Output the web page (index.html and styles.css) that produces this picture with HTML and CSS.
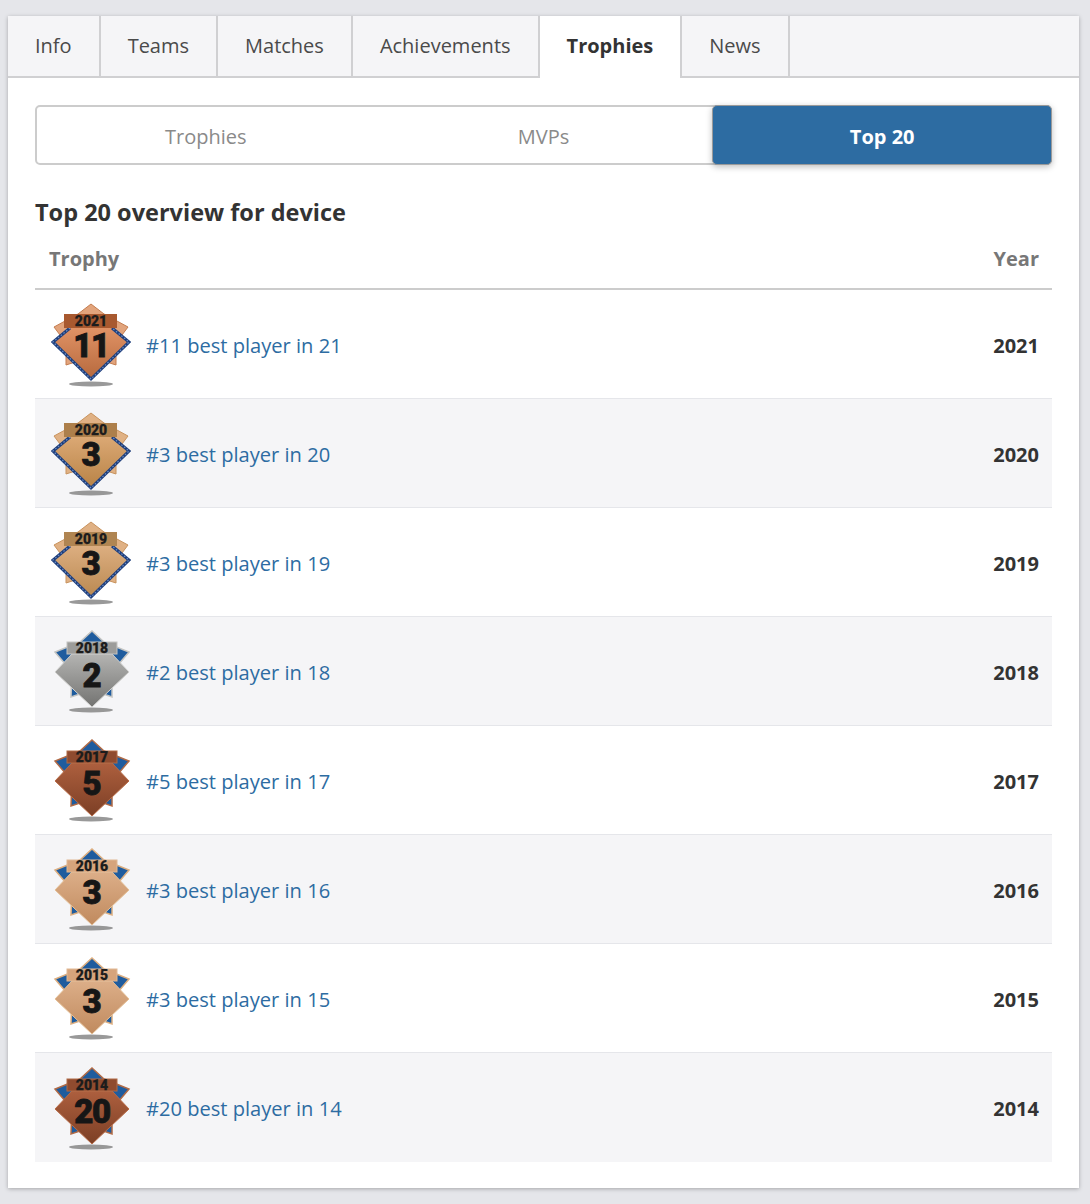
FILE: index.html
```html
<!DOCTYPE html>
<html lang="en">
<head>
<meta charset="utf-8">
<title>Trophies</title>
<link rel="stylesheet" href="styles.css">
</head>
<body>
<svg class="defs" aria-hidden="true">
  <defs>
    <linearGradient id="copper" x1="0" y1="0" x2="0" y2="1"><stop offset="0" stop-color="#e09265"/><stop offset="1" stop-color="#b5683c"/></linearGradient>
    <linearGradient id="tan" x1="0" y1="0" x2="0" y2="1"><stop offset="0" stop-color="#dba874"/><stop offset="1" stop-color="#b78245"/></linearGradient>
    <linearGradient id="tan2" x1="0" y1="0" x2="0" y2="1"><stop offset="0" stop-color="#dcae80"/><stop offset="1" stop-color="#b98850"/></linearGradient>
    <linearGradient id="silver" x1="0" y1="0" x2="0" y2="1"><stop offset="0" stop-color="#b4b4b2"/><stop offset="1" stop-color="#737371"/></linearGradient>
    <linearGradient id="brown" x1="0" y1="0" x2="0" y2="1"><stop offset="0" stop-color="#ad5f3e"/><stop offset="1" stop-color="#7c3f25"/></linearGradient>
    <linearGradient id="sand" x1="0" y1="0" x2="0" y2="1"><stop offset="0" stop-color="#dcae88"/><stop offset="1" stop-color="#c08a5e"/></linearGradient>
    <path id="star-a" d="M51 9 64 19 88 32 76 48 76 70 51 62 26 70 26 48 14 32 38 19Z"/>
    <path id="star-b" d="M52 9 64 20 89 30 72 50 72 75 52 68 31 75 32 50 15 30 40 20Z"/>
    <path id="gem-a" d="M30 33 72 33 90 47 51 85 12 47Z"/>
    <path id="gem-b" d="M32 32 72 32 89 50 52 85 15 50Z"/>
    <path id="rim" d="M30 33 13 47 51 84 89 47 72 33"/>
  </defs>
</svg>
<main class="card">
  <nav class="tabs">
    <a class="tab">Info</a>
    <a class="tab">Teams</a>
    <a class="tab">Matches</a>
    <a class="tab">Achievements</a>
    <a class="tab active">Trophies</a>
    <a class="tab">News</a>
  </nav>
  <section class="content">
    <div class="segmented">
      <a class="seg">Trophies</a>
      <a class="seg">MVPs</a>
      <a class="seg on">Top 20</a>
    </div>
    <h2 class="title">Top 20 overview for device</h2>
    <div class="thead"><span>Trophy</span><span>Year</span></div>

    <div class="row">
      <svg class="badge" viewBox="11 8 80 84">
        <ellipse class="shadow" cx="51" cy="89" rx="22" ry="2.5"/>
        <use href="#star-a" fill="#e2a47c" stroke="#c47d50"/>
        <use href="#gem-a" fill="url(#copper)"/>
        <use href="#rim" class="rim"/>
        <use href="#rim" class="dots"/>
        <rect x="24" y="19" width="53" height="14" fill="#a8592f"/>
        <text class="yr" x="51" y="31">2021</text>
        <text class="num pair" x="51" y="62">11</text>
      </svg>
      <a class="link">#11 best player in 21</a>
      <b class="year">2021</b>
    </div>

    <div class="row alt">
      <svg class="badge" viewBox="11 8 80 84">
        <ellipse class="shadow" cx="51" cy="89" rx="22" ry="2.5"/>
        <use href="#star-a" fill="#e0b184" stroke="#c8935e"/>
        <use href="#gem-a" fill="url(#tan)"/>
        <use href="#rim" class="rim"/>
        <use href="#rim" class="dots"/>
        <rect x="24" y="19" width="53" height="14" fill="#ad7f4b"/>
        <text class="yr" x="51" y="31">2020</text>
        <text class="num" x="51" y="62">3</text>
      </svg>
      <a class="link">#3 best player in 20</a>
      <b class="year">2020</b>
    </div>

    <div class="row">
      <svg class="badge" viewBox="11 8 80 84">
        <ellipse class="shadow" cx="51" cy="89" rx="22" ry="2.5"/>
        <use href="#star-a" fill="#e0b184" stroke="#c8935e"/>
        <use href="#gem-a" fill="url(#tan2)"/>
        <use href="#rim" class="rim"/>
        <use href="#rim" class="dots"/>
        <rect x="24" y="19" width="53" height="14" fill="#b08552"/>
        <text class="yr" x="51" y="31">2019</text>
        <text class="num" x="51" y="62">3</text>
      </svg>
      <a class="link">#3 best player in 19</a>
      <b class="year">2019</b>
    </div>

    <div class="row alt">
      <svg class="badge" viewBox="11 8 80 84">
        <ellipse class="shadow" cx="51" cy="88" rx="22" ry="2.5"/>
        <use href="#star-b" fill="#1f5c9e" stroke="#c4c4c2" stroke-width="1.5"/>
        <use href="#gem-b" fill="url(#silver)" stroke="#d0d0ce"/>
        <rect x="27" y="20" width="50" height="12" fill="#9c9c9a" stroke="#c4c4c2"/>
        <text class="yr" x="52" y="31">2018</text>
        <text class="num" x="52" y="65">2</text>
      </svg>
      <a class="link">#2 best player in 18</a>
      <b class="year">2018</b>
    </div>

    <div class="row">
      <svg class="badge" viewBox="11 8 80 84">
        <ellipse class="shadow" cx="51" cy="88" rx="22" ry="2.5"/>
        <use href="#star-b" fill="#1f5c9e" stroke="#b06a46" stroke-width="1.5"/>
        <use href="#gem-b" fill="url(#brown)" stroke="#b86c48"/>
        <rect x="27" y="20" width="50" height="12" fill="#8f4b2f" stroke="#b06a46"/>
        <text class="yr" x="52" y="31">2017</text>
        <text class="num" x="52" y="64">5</text>
      </svg>
      <a class="link">#5 best player in 17</a>
      <b class="year">2017</b>
    </div>

    <div class="row alt">
      <svg class="badge" viewBox="11 8 80 84">
        <ellipse class="shadow" cx="51" cy="88" rx="22" ry="2.5"/>
        <use href="#star-b" fill="#1f5c9e" stroke="#dcae80" stroke-width="1.5"/>
        <use href="#gem-b" fill="url(#sand)" stroke="#e4c098"/>
        <rect x="27" y="20" width="50" height="12" fill="#d6a47c" stroke="#e0b894"/>
        <text class="yr" x="52" y="31">2016</text>
        <text class="num" x="52" y="64">3</text>
      </svg>
      <a class="link">#3 best player in 16</a>
      <b class="year">2016</b>
    </div>

    <div class="row">
      <svg class="badge" viewBox="11 8 80 84">
        <ellipse class="shadow" cx="51" cy="88" rx="22" ry="2.5"/>
        <use href="#star-b" fill="#1f5c9e" stroke="#dcae80" stroke-width="1.5"/>
        <use href="#gem-b" fill="url(#sand)" stroke="#e4c098"/>
        <rect x="27" y="20" width="50" height="12" fill="#d6a47c" stroke="#e0b894"/>
        <text class="yr" x="52" y="31">2015</text>
        <text class="num" x="52" y="64">3</text>
      </svg>
      <a class="link">#3 best player in 15</a>
      <b class="year">2015</b>
    </div>

    <div class="row alt last">
      <svg class="badge" viewBox="11 8 80 84">
        <ellipse class="shadow" cx="51" cy="88" rx="22" ry="2.5"/>
        <use href="#star-b" fill="#1f5c9e" stroke="#b06a46" stroke-width="1.5"/>
        <use href="#gem-b" fill="url(#brown)" stroke="#b86c48"/>
        <rect x="27" y="20" width="50" height="12" fill="#8f4b2f" stroke="#b06a46"/>
        <text class="yr" x="52" y="31">2014</text>
        <text class="num pair" x="52" y="64">20</text>
      </svg>
      <a class="link">#20 best player in 14</a>
      <b class="year">2014</b>
    </div>
  </section>
</main>
</body>
</html>
```
FILE: styles.css
```css
* { box-sizing: border-box; }
html, body { margin: 0; }
body {
  background: #e5e6ea;
  padding: 16px 11px 16px 8px;
  font-family: "Open Sans", "Noto Sans", sans-serif;
  font-size: 20px;
  color: #333;
}
.defs { position: absolute; width: 0; height: 0; }
.card {
  background: #fff;
  box-shadow: 0 1px 4px rgba(0, 0, 0, .28);
  height: 1172px;
}
.tabs {
  display: flex;
  height: 62px;
  background: #f5f5f7;
  border-bottom: 2px solid #d0d0d2;
}
.tab {
  display: flex;
  align-items: center;
  padding: 0 27px 4px;
  height: 62px;
  color: #4a4a4a;
  border-right: 2px solid #d0d0d2;
}
.tab.active {
  background: #fff;
  color: #333;
  font-weight: 700;
  border-left: 2px solid #d0d0d2;
  margin-left: -2px;
}
.content { padding: 27px 27px 0; }
.segmented {
  display: grid;
  grid-template-columns: 1fr 1fr 1fr;
  height: 60px;
  border: 2px solid #ccc;
  border-radius: 5px;
}
.seg {
  display: flex;
  align-items: center;
  justify-content: center;
  padding-top: 2px;
  color: #8a8a8a;
}
.seg.on {
  margin: -2px -2px -2px 0;
  background: #2d6ca2;
  color: #fff;
  font-weight: 700;
  border-radius: 5px;
  border: 1px solid #9a9a9a;
  box-shadow: 0 2px 6px rgba(0, 0, 0, .25);
}
.title {
  margin: 31px 0 0;
  font-size: 23.5px;
  line-height: 32px;
  font-weight: 700;
  color: #333;
}
.thead {
  display: flex;
  justify-content: space-between;
  height: 62px;
  padding: 16px 13px 0 14px;
  line-height: 30px;
  font-weight: 700;
  color: #777;
  border-bottom: 2px solid #ccc;
}
.row {
  display: flex;
  align-items: center;
  height: 109px;
  padding: 0 13px 0 16px;
  border-bottom: 1px solid #e5e6ea;
}
.row.alt { background: #f5f5f7; }
.row.last { border-bottom: 0; }
.badge {
  width: 80px;
  height: 84px;
  flex: none;
  margin-top: 2px;
  margin-right: 15px;
}
.link { color: #2d6ca2; flex: 1; font-size: 20.1px; padding-top: 2px; }
.year { font-weight: 700; color: #333; padding-top: 2px; }
.shadow { fill: #808080; opacity: .8; filter: blur(.6px); }
.rim { fill: none; stroke: #1f3f7c; stroke-width: 3; }
.dots { fill: none; stroke: #6f8fc8; stroke-width: 1.2; stroke-dasharray: 1.5 2; }
.yr {
  font-family: Roboto, sans-serif;
  font-weight: 900;
  font-size: 14px;
  text-anchor: middle;
  fill: #1c1c1c;
  stroke: #1c1c1c;
  stroke-width: .25px;
}
.num {
  font-family: Roboto, sans-serif;
  font-weight: 900;
  font-size: 33px;
  text-anchor: middle;
  fill: #161616;
  stroke: #161616;
  stroke-width: .8px;
}
.num.pair { letter-spacing: -1.5px; }
```
